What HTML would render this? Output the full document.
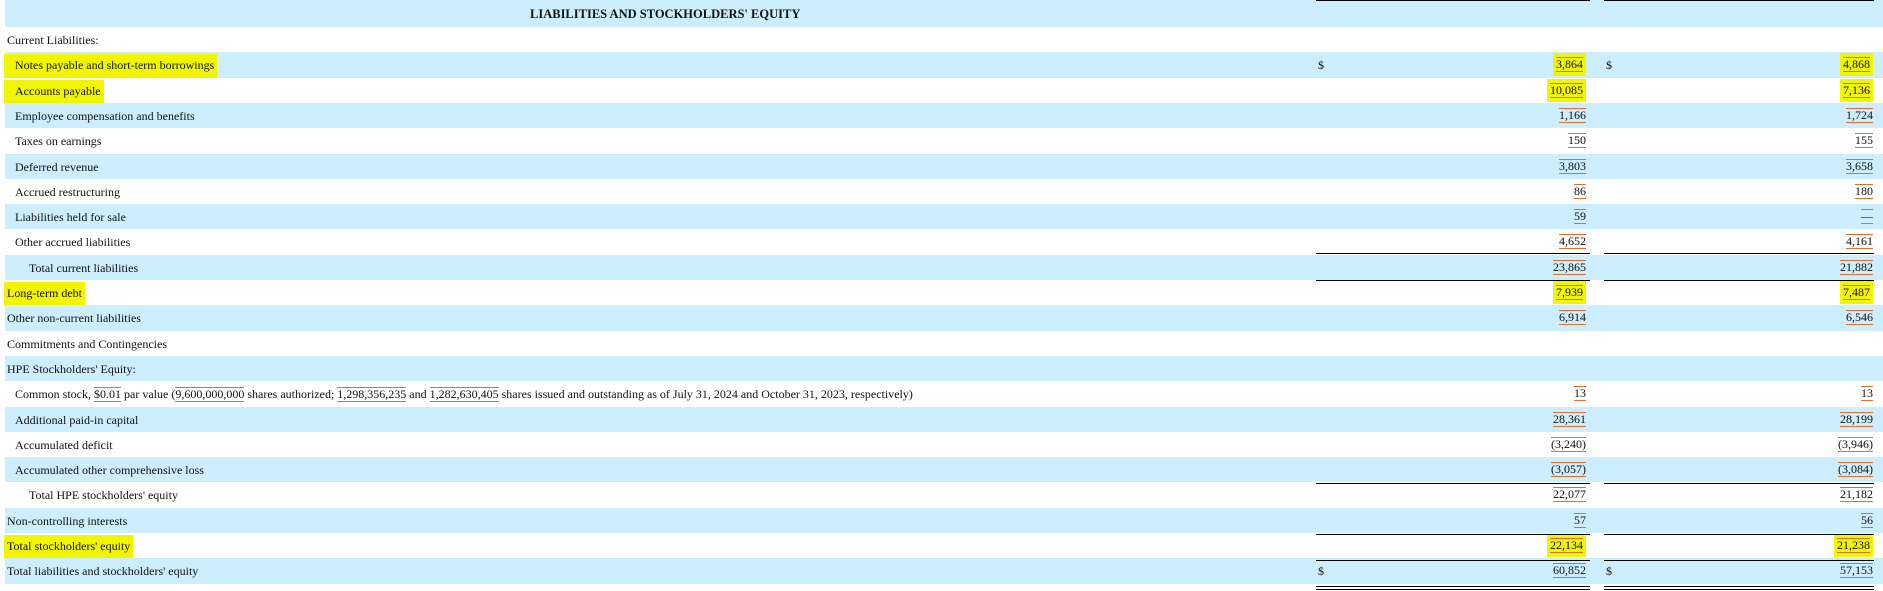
<!DOCTYPE html>
<html><head><meta charset="utf-8"><style>
body{margin:0;width:1883px;height:591px;background:#fff;position:relative;overflow:hidden;font-family:"Liberation Serif",serif;font-size:12px;color:#111}
.r{position:absolute;left:5px;width:1878px;}
.b{background:#cceeff}
.t{position:absolute;white-space:nowrap}
.n{position:absolute;white-space:nowrap;text-align:right}
.n span,.u{border-top:1px solid #e07030;border-bottom:1px solid #e07030;line-height:13px;display:inline-block}
.hl{background:#f2f500}
.ln{position:absolute;height:1px;background:#000}
</style></head><body>
<div class="r b" style="top:0;height:27px"></div>
<div class="t" style="left:530px;top:7px;font-weight:bold;font-size:12.5px">LIABILITIES AND STOCKHOLDERS' EQUITY</div>
<div class="ln" style="left:1316px;width:274px;top:0"></div>
<div class="ln" style="left:1604px;width:270px;top:0"></div>
<div id="rows"></div>
<script>
(function(){
var rows=[
["Current Liabilities:",6,"","",0],
["Notes payable and short-term borrowings",14,"3,864","4,868",1,1],
["Accounts payable",14,"10,085","7,136",0,1],
["Employee compensation and benefits",14,"1,166","1,724"],
["Taxes on earnings",14,"150","155"],
["Deferred revenue",14,"3,803","3,658"],
["Accrued restructuring",14,"86","180"],
["Liabilities held for sale",14,"59","—"],
["Other accrued liabilities",14,"4,652","4,161"],
["Total current liabilities",28,"23,865","21,882"],
["Long-term debt",6,"7,939","7,487",0,1],
["Other non-current liabilities",6,"6,914","6,546"],
["Commitments and Contingencies",6,"",""],
["HPE Stockholders' Equity:",6,"",""],
["COMMON",14,"13","13"],
["Additional paid-in capital",14,"28,361","28,199"],
["Accumulated deficit",14,"(3,240)","(3,946)"],
["Accumulated other comprehensive loss",14,"(3,057)","(3,084)"],
["Total HPE stockholders' equity",28,"22,077","21,182"],
["Non-controlling interests",6,"57","56"],
["Total stockholders' equity",6,"22,134","21,238",0,1],
["Total liabilities and stockholders' equity",6,"60,852","57,153",1]
];
var h="";
for(var i=0;i<rows.length;i++){
 var k=i+1,y=Math.round(27+i*25.3),ht=Math.round(27+(i+1)*25.3)-y;
 var r=rows[i];
 if(k%2==0)h+='<div class="r b" style="top:'+y+'px;height:'+ht+'px"></div>';
 var txt=r[0];
 if(txt=="COMMON")txt='Common stock, <span class="u">$0.01</span> par value (<span class="u">9,600,000,000</span> shares authorized; <span class="u">1,298,356,235</span> and <span class="u">1,282,630,405</span> shares issued and outstanding as of July 31, 2024 and October 31, 2023, respectively)';
 else if(r[5])txt='<span class="hl" style="padding:4px 3px 6px '+(r[1]-3)+'px;margin-left:-'+(r[1]-3)+'px">'+txt+'</span>';
 h+='<div class="t" style="left:'+(r[1]+1)+'px;top:'+(y+6)+'px">'+txt+'</div>';
 var hs=r[5]?'background:#f2f500;padding:4px 3px 5px':'';
 if(r[2])h+='<div class="n" style="right:297px;top:'+(y+5)+'px"><b style="font-weight:normal;'+hs+'"><span>'+r[2]+'</span></b></div>';
 if(r[3])h+='<div class="n" style="right:10px;top:'+(y+5)+'px"><b style="font-weight:normal;'+hs+'"><span>'+r[3]+'</span></b></div>';
 if(r[4]){h+='<div class="t" style="left:1318px;top:'+(y+6)+'px">$</div><div class="t" style="left:1606px;top:'+(y+6)+'px">$</div>';}
}
document.getElementById('rows').innerHTML=h;
})();
</script>
<div class="ln" style="left:1316px;width:274px;top:253px"></div>
<div class="ln" style="left:1604px;width:270px;top:253px"></div>
<div class="ln" style="left:1316px;width:274px;top:280px"></div>
<div class="ln" style="left:1604px;width:270px;top:280px"></div>
<div class="ln" style="left:1316px;width:274px;top:483px"></div>
<div class="ln" style="left:1604px;width:270px;top:483px"></div>
<div class="ln" style="left:1316px;width:274px;top:534px"></div>
<div class="ln" style="left:1604px;width:270px;top:534px"></div>
<div class="ln" style="left:1316px;width:274px;top:560px"></div>
<div class="ln" style="left:1604px;width:270px;top:560px"></div>
<div class="ln" style="left:1316px;width:274px;top:586px"></div>
<div class="ln" style="left:1604px;width:270px;top:586px"></div>
<div class="ln" style="left:1316px;width:274px;top:589px"></div>
<div class="ln" style="left:1604px;width:270px;top:589px"></div>
</body></html>
